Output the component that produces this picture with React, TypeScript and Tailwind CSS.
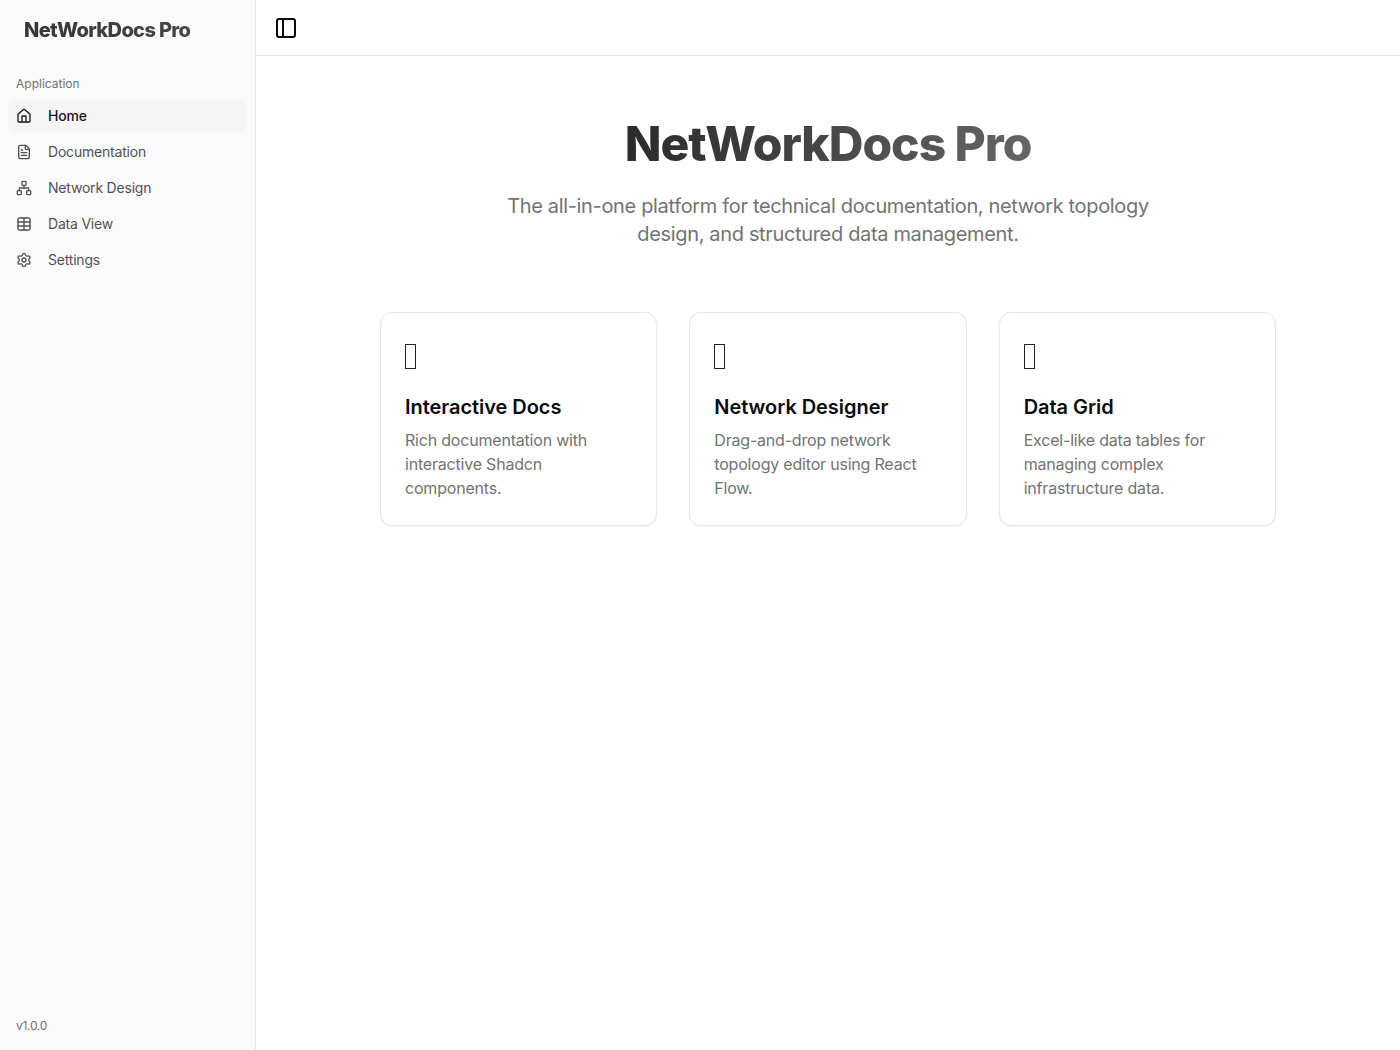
import { Home, FileText, Network, Table, Settings, PanelLeft } from "lucide-react";

const navItems = [
  { label: "Home", icon: Home, active: true },
  { label: "Documentation", icon: FileText },
  { label: "Network Design", icon: Network },
  { label: "Data View", icon: Table },
  { label: "Settings", icon: Settings },
];

const features = [
  { title: "Interactive Docs", text: "Rich documentation with interactive Shadcn components." },
  { title: "Network Designer", text: "Drag-and-drop network topology editor using React Flow." },
  { title: "Data Grid", text: "Excel-like data tables for managing complex infrastructure data." },
];

export default function App() {
  return (
    <div className="flex h-[1050px] bg-white font-['Inter',sans-serif] text-[#0a0a0a]">
      <aside className="flex w-[256px] shrink-0 flex-col border-r border-[#e5e5e5] bg-[#fafafa]">
        <div className="px-6 pt-[18px] pb-[18px]">
          <div className="bg-gradient-to-r from-[#363636] to-[#4a4a4a] bg-clip-text text-xl leading-6 font-extrabold tracking-[-0.64px] text-transparent">
            NetWorkDocs Pro
          </div>
        </div>
        <div className="flex-1 p-2">
          <div className="flex h-8 items-center px-2 text-xs text-[#737373]">Application</div>
          <nav className="flex flex-col gap-1">
            {navItems.map((item) => (
              <a
                key={item.label}
                className={
                  item.active
                    ? "flex h-8 items-center gap-4 rounded-md bg-[#f5f5f5] px-2 text-sm font-medium tracking-[-0.15px] text-[#171717]"
                    : "flex h-8 items-center gap-4 rounded-md px-2 text-sm tracking-[-0.2px] text-[#525252]"
                }
              >
                <item.icon className="h-4 w-4 shrink-0" />
                {item.label}
              </a>
            ))}
          </nav>
        </div>
        <div className="px-4 pb-4 text-xs leading-4 tracking-[-0.3px] text-[#737373]">v1.0.0</div>
      </aside>

      <div className="flex min-w-0 flex-1 flex-col">
        <header className="flex h-[56px] items-center border-b border-[#e5e5e5] px-4">
          <button className="flex h-7 w-7 items-center justify-center">
            <PanelLeft className="h-6 w-6" strokeWidth={2} />
          </button>
        </header>

        <main className="flex flex-col items-center pt-[60px]">
          <h1 className="bg-gradient-to-r from-[#2b2b2b] to-[#666666] bg-clip-text text-5xl leading-[56px] font-extrabold tracking-[-1.03px] text-transparent">
            NetWorkDocs Pro
          </h1>
          <p className="mt-5 w-[672px] text-center text-xl leading-7 tracking-[-0.34px] text-[#737373]">
            The all-in-one platform for technical documentation, network topology design, and structured data management.
          </p>

          <div className="mt-16 grid w-[896px] grid-cols-3 gap-8">
            {features.map((f) => (
              <div key={f.title} className="rounded-xl border border-[#e5e5e5] bg-white px-6 pt-6 pb-[25px] shadow-xs">
                {/* missing-glyph box, the emoji has no font in the original capture */}
                <div className="mb-4 h-10 pt-[7px]">
                  <div className="h-[25px] w-[11px] border border-[#222222]" />
                </div>
                <h3 className="mb-[7px] text-xl leading-7 font-semibold tracking-[-0.05px]">{f.title}</h3>
                <p className="text-base leading-6 tracking-[-0.2px] text-[#737373]">{f.text}</p>
              </div>
            ))}
          </div>
        </main>
      </div>
    </div>
  );
}
